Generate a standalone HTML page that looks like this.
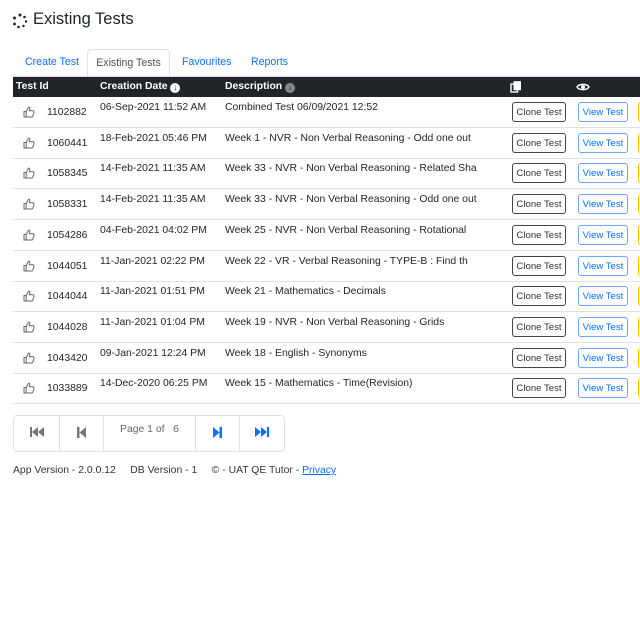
<!DOCTYPE html>
<html><head><meta charset="utf-8"><style>
body{margin:0;width:640px;height:640px;overflow:hidden;background:#fff;font-family:"Liberation Sans",sans-serif;color:#212529;font-size:10.4px;position:relative}
.a{position:absolute;white-space:nowrap}
.title{left:33px;top:10px;font-size:16.5px}
.tab{top:49px;height:27px;line-height:27px;font-size:10.6px;color:#0d6efd}
.act{border:1px solid #dee2e6;border-bottom:none;background:#fff;color:#495057;border-radius:4px 4px 0 0;box-sizing:border-box}
.hdr{left:13px;top:77px;width:627px;height:20px;background:#212529;color:#fff;font-weight:bold}
.row{left:13px;width:627px;height:30px;border-bottom:1px solid #dee2e6}
.btn{position:absolute;top:5px;height:20px;line-height:19px;border-radius:3px;text-align:center;font-size:9.6px;box-sizing:border-box}
.cl{left:499px;width:54px;border:1px solid #444;color:#333}
.vw{left:565px;width:50px;border:1px solid #6ea8fe;color:#0d6efd}
.y{left:625px;width:10px;border:1px solid #ffc107;border-right:none}
.pg{top:415px;height:37px;border:1px solid #dee2e6;box-sizing:border-box;text-align:center;line-height:35px}
.pg svg{margin-top:11px}
</style></head><body>
<div class="a title"><svg width="16" height="16" viewBox="0 0 16 16" style="position:absolute;left:-21px;top:3px"><g fill="#222"><circle cx="8" cy="2" r="1.5"/><circle cx="12.5" cy="4" r="1.3"/><circle cx="14" cy="8.5" r="1.2"/><circle cx="11.5" cy="13" r="1.2"/><circle cx="6.5" cy="14" r="1.3"/><circle cx="2.5" cy="11" r="1.4"/><circle cx="2.5" cy="5" r="1.5"/></g></svg>Existing Tests</div>
<div class="a" style="left:13px;top:76px;width:627px;height:1px;background:#dee2e6"></div>
<div class="a tab" style="left:25px">Create Test</div>
<div class="a tab act" style="left:87px;width:83px;text-align:center">Existing Tests</div>
<div class="a tab" style="left:182px">Favourites</div>
<div class="a tab" style="left:251px">Reports</div>
<div class="a hdr">
<span class="a" style="left:3px;top:4px">Test Id</span>
<span class="a" style="left:87px;top:4px">Creation Date <span style="display:inline-block;width:10px;height:10px;border-radius:50%;background:#fff;color:#212529;font-size:8px;line-height:10px;text-align:center;vertical-align:-1px">↓</span></span>
<span class="a" style="left:212px;top:4px">Description <span style="display:inline-block;width:10px;height:10px;border-radius:50%;background:#888;color:#212529;font-size:8px;line-height:10px;text-align:center;vertical-align:-1px">↓</span></span>
<svg class="a" style="left:497px;top:4px" width="12" height="12" viewBox="0 0 12 12"><rect x="1" y="3" width="6.5" height="8" fill="none" stroke="#fff" stroke-width="1.4"/><rect x="4" y="0.7" width="6.5" height="8" fill="#fff" stroke="#fff"/></svg>
<svg class="a" style="left:563px;top:5px" width="14" height="10" viewBox="0 0 14 10"><path d="M1 5C3 1.5 11 1.5 13 5C11 8.5 3 8.5 1 5Z" fill="none" stroke="#fff" stroke-width="1.4"/><circle cx="7" cy="5" r="2" fill="#fff"/></svg>
</div>
<div id="rows"></div>
<script>
var d=[["1102882","06-Sep-2021 11:52 AM","Combined Test 06/09/2021 12:52"],["1060441","18-Feb-2021 05:46 PM","Week 1 - NVR - Non Verbal Reasoning - Odd one out"],["1058345","14-Feb-2021 11:35 AM","Week 33 - NVR - Non Verbal Reasoning - Related Sha"],["1058331","14-Feb-2021 11:35 AM","Week 33 - NVR - Non Verbal Reasoning - Odd one out"],["1054286","04-Feb-2021 04:02 PM","Week 25 - NVR - Non Verbal Reasoning - Rotational"],["1044051","11-Jan-2021 02:22 PM","Week 22 - VR - Verbal Reasoning - TYPE-B : Find th"],["1044044","11-Jan-2021 01:51 PM","Week 21 - Mathematics - Decimals"],["1044028","11-Jan-2021 01:04 PM","Week 19 - NVR - Non Verbal Reasoning - Grids"],["1043420","09-Jan-2021 12:24 PM","Week 18 - English - Synonyms"],["1033889","14-Dec-2020 06:25 PM","Week 15 - Mathematics - Time(Revision)"]];
var th='<svg class="a" style="left:10px;top:9px" width="12" height="12" viewBox="0 0 12 12"><path d="M1 5.5H3.2V11H1Z M3.2 5.5L5.5 1.2C6.5 1 7 1.8 6.8 3L6.4 4.8H10C10.8 4.8 11.3 5.5 11 6.3L9.8 10.2C9.6 10.7 9.2 11 8.7 11H3.2" fill="none" stroke="#666" stroke-width="1"/></svg>';
var h="";d.forEach(function(r,i){var t=97+i*30.7;h+='<div class="a row" style="top:'+t+'px">'+th+'<span class="a" style="left:34px;top:10px">'+r[0]+'</span><span class="a" style="left:87px;top:5px">'+r[1]+'</span><span class="a" style="left:212px;top:5px">'+r[2]+'</span><div class="btn cl">Clone Test</div><div class="btn vw">View Test</div><div class="btn y"></div></div>'});
document.getElementById("rows").innerHTML=h;
</script>
<div class="a pg" style="left:13px;width:47px;border-radius:4px 0 0 4px"><svg width="14" height="10" viewBox="0 0 14 10"><path d="M0 0H2V10H0Z M8 0V10L2 5Z M14 0V10L8 5Z" fill="#777"/></svg></div>
<div class="a pg" style="left:59px;width:45px"><svg width="9" height="11" viewBox="0 0 9 11"><path d="M0 0H2.5V11H0Z M9 0V11L2.5 5.5Z" fill="#777"/></svg></div>
<div class="a pg" style="left:103px;width:93px;color:#666;line-height:28px">Page 1 of &nbsp; 6</div>
<div class="a pg" style="left:195px;width:45px"><svg width="9" height="11" viewBox="0 0 9 11"><path d="M0 0V11L6.5 5.5Z M6.5 0H9V11H6.5Z" fill="#0d6efd"/></svg></div>
<div class="a pg" style="left:239px;width:46px;border-radius:0 4px 4px 0"><svg width="14" height="10" viewBox="0 0 14 10"><path d="M0 0V10L6 5Z M6 0V10L12 5Z M12 0H14V10H12Z" fill="#0d6efd"/></svg></div>
<div class="a" style="left:13px;top:465px;color:#333">App Version - 2.0.0.12 &nbsp;&nbsp;&nbsp; DB Version - 1 &nbsp;&nbsp;&nbsp; © - UAT QE Tutor - <span style="color:#0d6efd;text-decoration:underline">Privacy</span></div>
</body></html>
